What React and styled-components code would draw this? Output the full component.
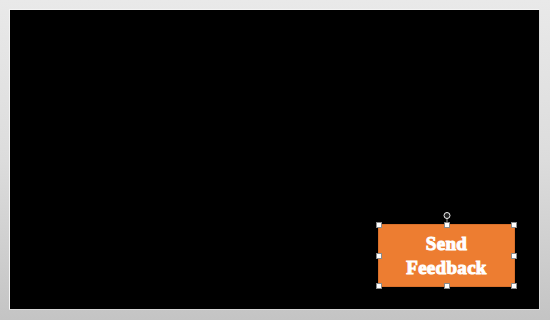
import React from "react";
import styled, { createGlobalStyle } from "styled-components";

const Global = createGlobalStyle`
  html, body { margin: 0; padding: 0; }
  body { width: 550px; height: 320px; overflow: hidden; font-family: "Liberation Sans", Arial, sans-serif; }
`;

const Frame = styled.div`
  width: 550px;
  height: 320px;
  box-sizing: border-box;
  padding: 9px 10px 10px 9px;
  background: linear-gradient(to bottom, #e9e9e9 0%, #dcdcdc 50%, #c4c4c4 100%);
`;

const Slide = styled.div`
  position: relative;
  width: 100%;
  height: 100%;
  box-sizing: border-box;
  background: #000;
  border: 1px solid #f4f4f4;
  border-right-color: #e2e2e2;
  border-bottom-color: #d8d8d8;
`;

const Shape = styled.div`
  position: absolute;
  left: ${(p) => p.x}px;
  top: ${(p) => p.y}px;
  width: ${(p) => p.w}px;
  height: ${(p) => p.h}px;
  box-sizing: border-box;
  background: #ed7d31;
  border: 1px solid #d9702b;
  display: flex;
  align-items: center;
  justify-content: center;
`;

const Label = styled.div`
  color: #fff;
  font-family: "Liberation Serif", "Times New Roman", serif;
  font-weight: 700;
  font-size: 19px;
  line-height: 24px;
  text-align: center;
  -webkit-text-stroke: 1px #fff;
  letter-spacing: 0.3px;
  margin-top: 1px;
`;

const Handle = styled.span`
  position: absolute;
  width: 4px;
  height: 4px;
  background: #fff;
  border: 1px solid #8a8a8a;
  left: ${(p) => p.hx}%;
  top: ${(p) => p.hy}%;
  transform: translate(-50%, -50%);
`;

const RotateStem = styled.span`
  position: absolute;
  left: 50%;
  top: -7px;
  width: 1px;
  height: 7px;
  background: #9a9a9a;
  transform: translateX(-50%);
`;

const RotateKnob = styled.span`
  position: absolute;
  left: 50%;
  top: -13px;
  width: 5px;
  height: 5px;
  border-radius: 50%;
  border: 1.5px solid #f2f2f2;
  background: #222;
  transform: translateX(-50%);
`;

const handles = [
  [0, 0], [50, 0], [100, 0],
  [0, 50], [100, 50],
  [0, 100], [50, 100], [100, 100],
];

export default function App() {
  return (
    <>
      <Global />
      <Frame>
        <Slide>
          <Shape x={368} y={214} w={137} h={63}>
            <Label>
              Send
              <br />
              Feedback
            </Label>
            <RotateStem />
            <RotateKnob />
            {handles.map(([hx, hy], i) => (
              <Handle key={i} hx={hx} hy={hy} />
            ))}
          </Shape>
        </Slide>
      </Frame>
    </>
  );
}
